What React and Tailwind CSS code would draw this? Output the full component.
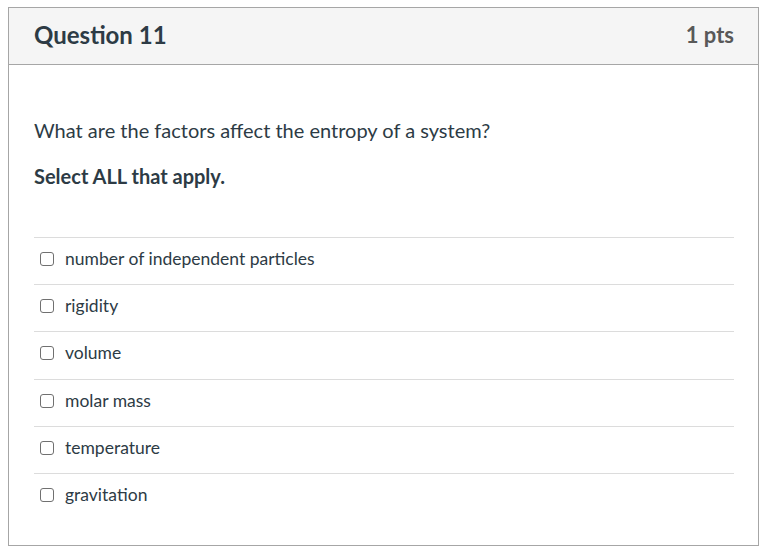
import React from "react";

const options = [
  "number of independent particles",
  "rigidity",
  "volume",
  "molar mass",
  "temperature",
  "gravitation",
];

export default function App() {
  return (
    <div className="w-[778px] h-[553px] bg-white pl-[8px] pt-[7px]" style={{ fontFamily: "Lato, 'Liberation Sans', sans-serif" }}>
      <div className="w-[751px] h-[539px] border border-[#a6a6a6] flex flex-col text-[#2d3b45]">
        <div className="h-[57px] bg-[#f5f5f5] border-b border-[#a6a6a6] flex items-center justify-between pl-[25px] pr-[24px] pb-[2px] shrink-0">
          <div className="text-[24px] leading-[30px] font-bold text-[#2d3b45]">Question 11</div>
          <div className="text-[22px] leading-[30px] font-bold text-[#595959]">1 pts</div>
        </div>
        <div className="pl-[25px] pr-[24px] pt-[51px]">
          <p className="text-[20px] leading-[28px]">What are the factors affect the entropy of a system?</p>
          <p className="text-[20px] leading-[28px] font-bold mt-[18px]">Select ALL that apply.</p>
          <div className="mt-[47px]">
            {options.map((o) => (
              <div key={o} className="h-[47.2px] border-t border-[#dcdcdc] flex items-center pl-[6px] pb-[4px]">
                <span className="w-[14px] h-[14px] border-[1.5px] border-[#707070] rounded-[3px] bg-white shrink-0" />
                <span className="ml-[11px] text-[17.5px] leading-[24px]">{o}</span>
              </div>
            ))}
          </div>
        </div>
      </div>
    </div>
  );
}
